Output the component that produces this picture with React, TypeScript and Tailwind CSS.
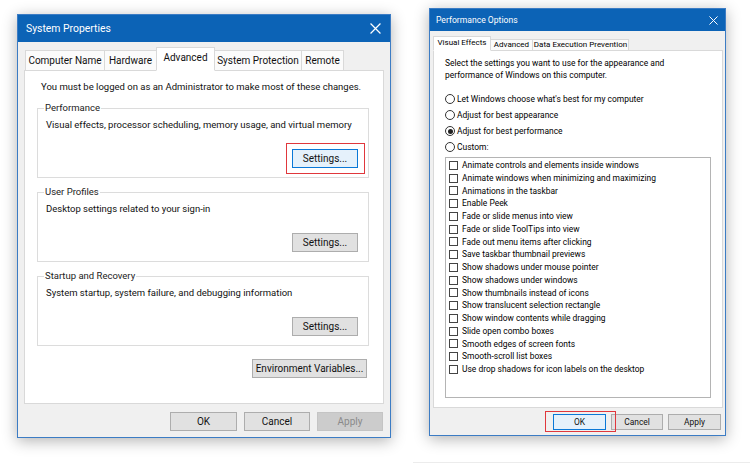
import React from 'react';

function CloseIcon({ size }: { size: number }) {
  return (
    <svg width={size} height={size} viewBox="0 0 10 10" className="shrink-0">
      <path d="M0.5 0.5 L9.5 9.5 M9.5 0.5 L0.5 9.5" stroke="white" strokeWidth="1.1" fill="none" />
    </svg>
  );
}

type BtnProps = {
  label: string;
  className: string;
  focused?: boolean;
  disabled?: boolean;
};

function Btn({ label, className, focused, disabled }: BtnProps) {
  const look = disabled
    ? 'bg-[#cccccc] border-[#c4c4c4] text-[#8a8a8a]'
    : focused
      ? 'bg-[#e5f1fb] border-[#0a78d7] text-[#111]'
      : 'bg-[#e1e1e1] border-[#adadad] text-[#111]';
  return <div className={`flex items-center justify-center border shrink-0 whitespace-nowrap ${look} ${className}`}>{label}</div>;
}

function Group({ title, text, highlight }: { title: string; text: string; highlight?: boolean }) {
  return (
    <fieldset className="min-w-0 border border-[#dcdcdc] pl-[8px] pr-[10px] pb-[9px] flex flex-col">
      <legend className="-ml-[2px] px-[1px] leading-[14px] text-[#222]">{title}</legend>
      <div className="mt-[3px] leading-[14px] whitespace-nowrap">{text}</div>
      <div className="mt-[17px] self-end relative">
        <Btn label="Settings..." focused={highlight} className="w-[66px] h-[19px] text-[10px]" />
        {highlight && (
          <div className="absolute -left-[6px] -right-[7px] -top-[6px] -bottom-[6px] border-[1.5px] border-[#e0373c]" />
        )}
      </div>
    </fieldset>
  );
}

function SystemProperties() {
  const tabs = [
    { label: 'Computer Name', w: 'w-[80px]' },
    { label: 'Hardware', w: 'w-[53px]' },
    { label: 'Advanced', w: 'w-[59px]', active: true },
    { label: 'System Protection', w: 'w-[88px]' },
    { label: 'Remote', w: 'w-[43px]' },
  ];
  return (
    <div className="w-[374px] h-[424px] mt-[14px] ml-[17px] flex flex-col shrink-0 border border-[#3c7cc4] bg-[#f0f0f0] shadow-[0_3px_14px_rgba(0,0,0,0.3)] text-[9.5px] text-[#111]">
      <div className="h-[27px] shrink-0 bg-[#0c63b6] flex items-center justify-between pl-[8px] pr-[9px] text-white text-[10.4px]">
        <span>System Properties</span>
        <CloseIcon size={11} />
      </div>
      <div className="flex flex-col pl-[6px] pr-[6px] pt-[5px] pb-[6px]">
        <div className="flex items-end h-[24px] pl-[1px] relative z-10 text-[10px]">
          {tabs.map((t, i) => (
            <div
              key={t.label}
              className={`${t.w} ${i > 0 ? '-ml-px' : ''} flex items-center justify-center whitespace-nowrap border border-[#d9d9d9] ${
                t.active ? 'h-[24px] bg-white border-b-white relative z-10 pb-[3px]' : 'h-[21px] bg-[#fbfbfb]'
              }`}
            >
              {t.label}
            </div>
          ))}
        </div>
        <div className="-mt-px h-[334px] bg-white border border-[#d9d9d9] pl-[12px] pr-[14px] pt-[9px] flex flex-col">
          <div className="ml-[4px] leading-[14px] whitespace-nowrap">You must be logged on as an Administrator to make most of these changes.</div>
          <div className="mt-[7px]">
            <Group title="Performance" text="Visual effects, processor scheduling, memory usage, and virtual memory" highlight />
          </div>
          <div className="mt-[7px]">
            <Group title="User Profiles" text="Desktop settings related to your sign-in" />
          </div>
          <div className="mt-[7px]">
            <Group title="Startup and Recovery" text="System startup, system failure, and debugging information" />
          </div>
          <div className="mt-[13px] self-end mr-[2px]">
            <Btn label="Environment Variables..." className="w-[115px] h-[19px] text-[10px]" />
          </div>
        </div>
        <div className="mt-[8px] flex justify-end gap-[7px] pr-[1px] text-[10px]">
          <Btn label="OK" className="w-[67px] h-[19px]" />
          <Btn label="Cancel" className="w-[66px] h-[19px]" />
          <Btn label="Apply" disabled className="w-[66px] h-[19px]" />
        </div>
      </div>
    </div>
  );
}

const effects = [
  'Animate controls and elements inside windows',
  'Animate windows when minimizing and maximizing',
  'Animations in the taskbar',
  'Enable Peek',
  'Fade or slide menus into view',
  'Fade or slide ToolTips into view',
  'Fade out menu items after clicking',
  'Save taskbar thumbnail previews',
  'Show shadows under mouse pointer',
  'Show shadows under windows',
  'Show thumbnails instead of icons',
  'Show translucent selection rectangle',
  'Show window contents while dragging',
  'Slide open combo boxes',
  'Smooth edges of screen fonts',
  'Smooth-scroll list boxes',
  'Use drop shadows for icon labels on the desktop',
];

const radios = [
  "Let Windows choose what's best for my computer",
  'Adjust for best appearance',
  'Adjust for best performance',
  'Custom:',
];

function PerformanceOptions() {
  const tabs = [
    { label: 'Visual Effects', w: 'w-[58px]', active: true },
    { label: 'Advanced', w: 'w-[43px]' },
    { label: 'Data Execution Prevention', w: 'w-[97px]' },
  ];
  return (
    <div className="w-[297px] h-[428px] mt-[8px] ml-[16px] flex flex-col border border-[#3c7cc4] bg-[#f0f0f0] shadow-[0_3px_14px_rgba(0,0,0,0.3)] text-[8.45px] text-[#000]">
      <div className="h-[22px] shrink-0 bg-[#0c63b6] flex items-center justify-between pl-[6px] pr-[7px] text-white text-[8.6px]">
        <span>Performance Options</span>
        <CloseIcon size={9} />
      </div>
      <div className="flex flex-col pl-[3px] pr-[2px] pt-[5px] pb-[5px]">
        <div className="flex items-end h-[15px] relative z-10">
          {tabs.map((t, i) => (
            <div
              key={t.label}
              className={`${t.w} ${i > 0 ? '-ml-px' : ''} flex items-center justify-center whitespace-nowrap border border-[#d9d9d9] text-[8px] ${
                t.active ? 'h-[15px] bg-white border-b-white relative z-10 pb-[2px]' : 'h-[12px] bg-[#fbfbfb]'
              }`}
            >
              {t.label}
            </div>
          ))}
        </div>
        <div className="-mt-px h-[358px] bg-white border border-[#d9d9d9] pl-[11px] pr-[11px] pt-[6px] flex flex-col">
          <div className="leading-[12px] whitespace-nowrap">
            Select the settings you want to use for the appearance and
            <br />
            performance of Windows on this computer.
          </div>
          <div className="mt-[10px] flex flex-col">
            {radios.map((r, i) => (
              <div key={r} className="h-[16px] flex items-center gap-[2px] whitespace-nowrap">
                <span className="w-[10px] h-[10px] rounded-full border border-[#333] flex items-center justify-center shrink-0">
                  {i === 2 && <span className="w-[5px] h-[5px] rounded-full bg-[#222]" />}
                </span>
                <span>{r}</span>
              </div>
            ))}
          </div>
          <div className="mt-[2px] h-[241px] border border-[#b4b4b4] pl-[3px] pt-[1px] flex flex-col">
            {effects.map(e => (
              <div key={e} className="h-[12.75px] flex items-center gap-[4px] whitespace-nowrap">
                <span className="w-[9px] h-[9px] border border-[#444] shrink-0" />
                <span>{e}</span>
              </div>
            ))}
          </div>
        </div>
        <div className="mt-[6px] flex justify-end gap-[5px] pr-[2px]">
          <div className="relative">
            <Btn label="OK" focused className="w-[53px] h-[16px]" />
            <div className="absolute -left-[8px] -right-[10px] -top-[3px] -bottom-[2px] border-[1.5px] border-[#e0373c]" />
          </div>
          <Btn label="Cancel" className="w-[52px] h-[16px]" />
          <Btn label="Apply" className="w-[53px] h-[16px]" />
        </div>
      </div>
    </div>
  );
}

export default function App() {
  return (
    <div className="w-[750px] h-[463px] bg-white flex items-start overflow-hidden font-['Roboto','Open_Sans',sans-serif]">
      <SystemProperties />
      <div className="ml-[22px] w-[337px] h-[463px] border-b border-[#ececec] flex items-start shrink-0">
        <PerformanceOptions />
      </div>
    </div>
  );
}
